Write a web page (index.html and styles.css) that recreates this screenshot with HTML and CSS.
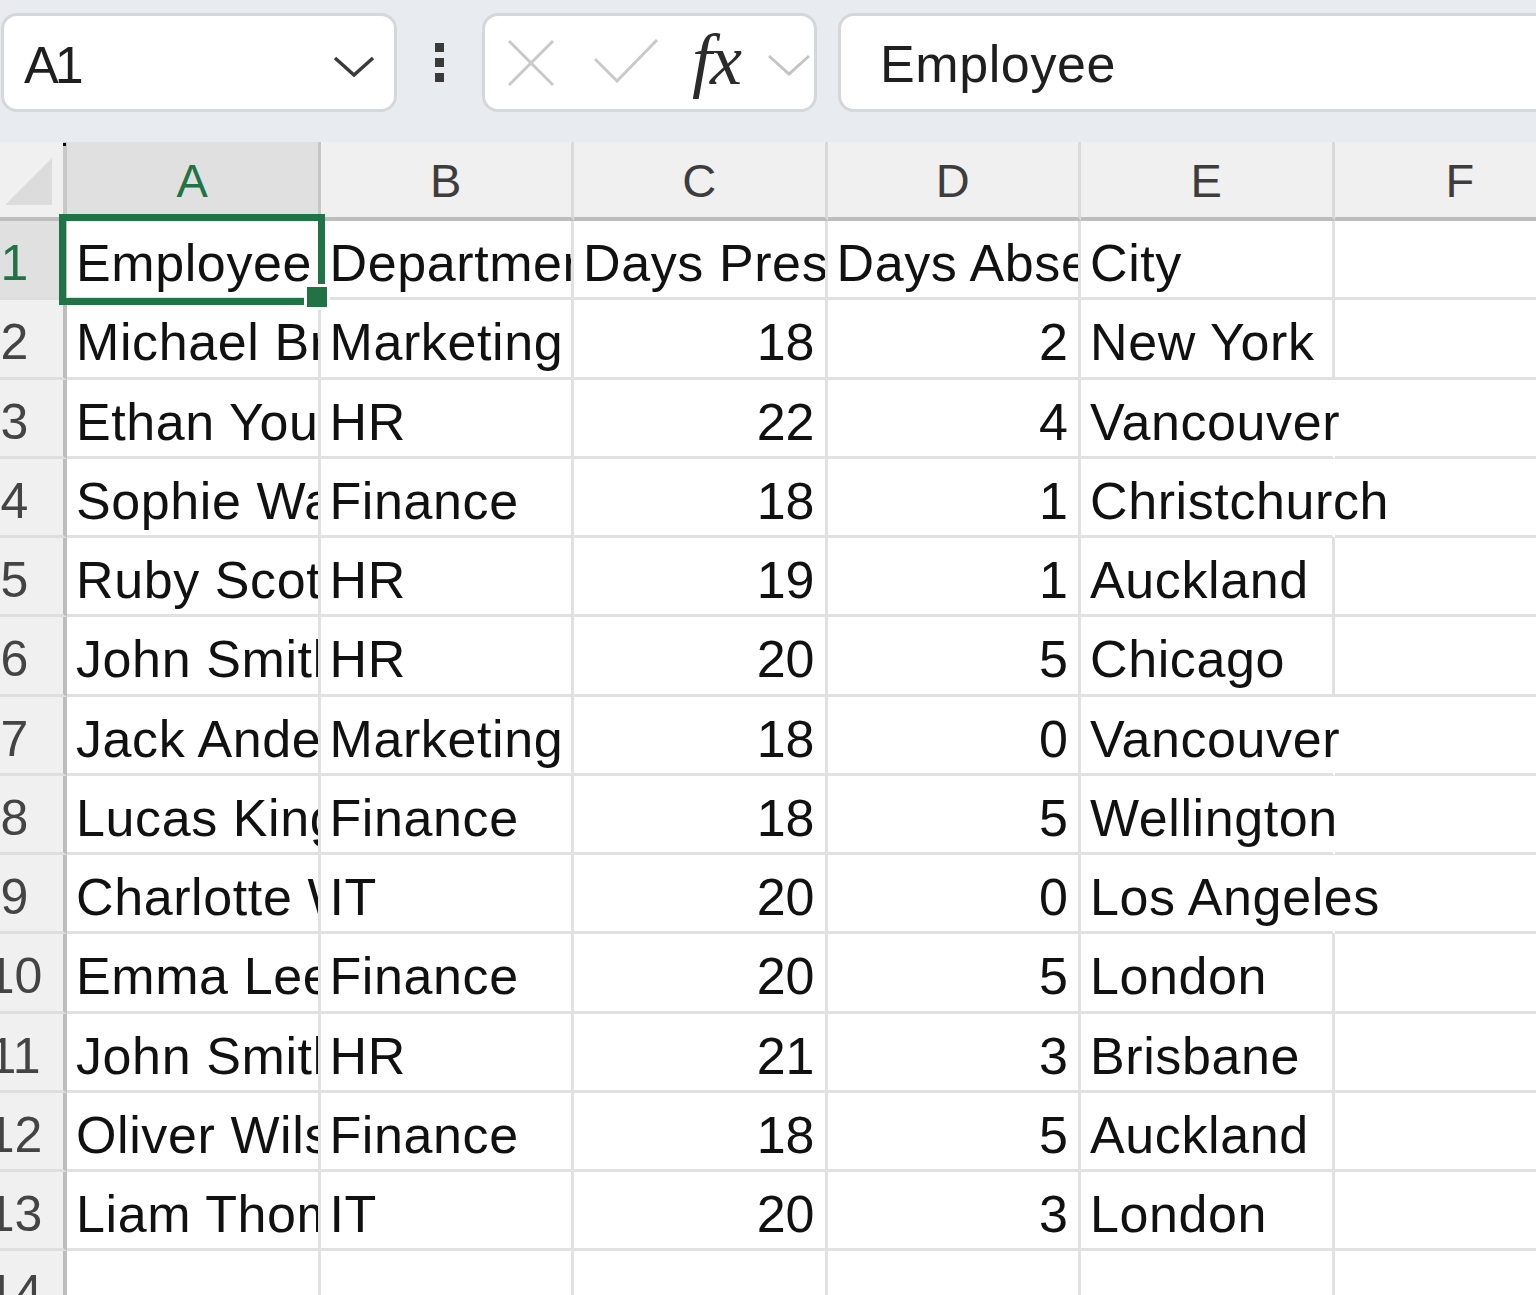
FILE: index.html
```html
<!DOCTYPE html>
<html lang="en">
<head>
<meta charset="utf-8">
<title>Sheet</title>
<link rel="stylesheet" href="styles.css">
</head>
<body>
<div class="toolbar">
  <div class="namebox">
    <span class="ref">A1</span>
    <svg class="nb-chev" width="42" height="22" viewBox="0 0 42 22"><polyline points="2,3 21,20 40,3" fill="none" stroke="#3a3a3a" stroke-width="3.5"/></svg>
  </div>
  <div class="dots"><i></i><i></i><i></i></div>
  <div class="fxbox">
    <svg class="ic-x" width="48" height="48" viewBox="0 0 48 48"><path d="M2 2 L46 46 M46 2 L2 46" stroke="#c9c9c9" stroke-width="3" fill="none"/></svg>
    <svg class="ic-check" width="64" height="44" viewBox="0 0 64 44"><polyline points="1,20 23,42 63,1" fill="none" stroke="#c9c9c9" stroke-width="3"/></svg>
    <span class="fx">fx</span>
    <svg class="ic-chev" width="42" height="22" viewBox="0 0 42 22"><polyline points="1,2 21,20 41,2" fill="none" stroke="#c4c4c4" stroke-width="3"/></svg>
  </div>
  <div class="formula">Employee</div>
</div>

<div class="sheet">
  <div class="grid">
    <div class="corner"><svg width="63" height="79" viewBox="0 0 63 79"><polygon points="52,16 52,63 5,63" fill="#dcdcdc"/></svg></div>
    <div class="colhdr active">A</div>
    <div class="colhdr">B</div>
    <div class="colhdr">C</div>
    <div class="colhdr">D</div>
    <div class="colhdr">E</div>
    <div class="colhdr">F</div>

    <div class="rowhdr active"><span>1</span></div>
    <div class="cell">Employee</div><div class="cell">Department</div><div class="cell">Days Present</div><div class="cell">Days Absent</div><div class="cell">City</div><div class="cell"></div>

    <div class="rowhdr"><span>2</span></div>
    <div class="cell">Michael Brown</div><div class="cell">Marketing</div><div class="cell num">18</div><div class="cell num">2</div><div class="cell">New York</div><div class="cell"></div>

    <div class="rowhdr"><span>3</span></div>
    <div class="cell">Ethan Young</div><div class="cell">HR</div><div class="cell num">22</div><div class="cell num">4</div><div class="cell spill">Vancouver</div><div class="cell"></div>

    <div class="rowhdr"><span>4</span></div>
    <div class="cell">Sophie Walker</div><div class="cell">Finance</div><div class="cell num">18</div><div class="cell num">1</div><div class="cell spill">Christchurch</div><div class="cell"></div>

    <div class="rowhdr"><span>5</span></div>
    <div class="cell">Ruby Scott</div><div class="cell">HR</div><div class="cell num">19</div><div class="cell num">1</div><div class="cell">Auckland</div><div class="cell"></div>

    <div class="rowhdr"><span>6</span></div>
    <div class="cell">John Smith</div><div class="cell">HR</div><div class="cell num">20</div><div class="cell num">5</div><div class="cell">Chicago</div><div class="cell"></div>

    <div class="rowhdr"><span>7</span></div>
    <div class="cell">Jack Anderson</div><div class="cell">Marketing</div><div class="cell num">18</div><div class="cell num">0</div><div class="cell spill">Vancouver</div><div class="cell"></div>

    <div class="rowhdr"><span>8</span></div>
    <div class="cell">Lucas King</div><div class="cell">Finance</div><div class="cell num">18</div><div class="cell num">5</div><div class="cell spill">Wellington</div><div class="cell"></div>

    <div class="rowhdr"><span>9</span></div>
    <div class="cell">Charlotte White</div><div class="cell">IT</div><div class="cell num">20</div><div class="cell num">0</div><div class="cell spill">Los Angeles</div><div class="cell"></div>

    <div class="rowhdr"><span>10</span></div>
    <div class="cell">Emma Lee</div><div class="cell">Finance</div><div class="cell num">20</div><div class="cell num">5</div><div class="cell">London</div><div class="cell"></div>

    <div class="rowhdr"><span>11</span></div>
    <div class="cell">John Smith</div><div class="cell">HR</div><div class="cell num">21</div><div class="cell num">3</div><div class="cell">Brisbane</div><div class="cell"></div>

    <div class="rowhdr"><span>12</span></div>
    <div class="cell">Oliver Wilson</div><div class="cell">Finance</div><div class="cell num">18</div><div class="cell num">5</div><div class="cell">Auckland</div><div class="cell"></div>

    <div class="rowhdr"><span>13</span></div>
    <div class="cell">Liam Thompson</div><div class="cell">IT</div><div class="cell num">20</div><div class="cell num">3</div><div class="cell">London</div><div class="cell"></div>

    <div class="rowhdr"><span>14</span></div>
    <div class="cell"></div><div class="cell"></div><div class="cell"></div><div class="cell"></div><div class="cell"></div><div class="cell"></div>
  </div>
  <div class="selection"><div class="handle"></div></div>
  <div class="tick"></div>
</div>
</body>
</html>
```

FILE: styles.css
```css
html, body {
  margin: 0;
  padding: 0;
  width: 1536px;
  height: 1295px;
  overflow: hidden;
  background: #ffffff;
  font-family: "Liberation Sans", Arial, sans-serif;
}

.toolbar {
  height: 142px;
  box-sizing: border-box;
  padding-top: 13px;
  background: #e8ebef;
  display: flex;
  align-items: flex-start;
  overflow: hidden;
}

.namebox,
.fxbox,
.formula {
  flex-shrink: 0;
  height: 99px;
  box-sizing: border-box;
  background: #ffffff;
  border: 3px solid #d5d7da;
  border-radius: 16px;
}

.namebox {
  margin-left: 1px;
  width: 396px;
  display: flex;
  align-items: center;
  padding: 0 19px 0 20px;
}

.ref {
  font-size: 52px;
  line-height: 52px;
  letter-spacing: -4px;
  color: #1f1f1f;
  margin-top: 4px;
}

.nb-chev {
  margin-left: auto;
  margin-top: 7px;
}

.dots {
  flex-shrink: 0;
  width: 85px;
  height: 99px;
  display: flex;
  flex-direction: column;
  align-items: center;
  justify-content: center;
  gap: 6px;
}

.dots i {
  display: block;
  width: 9px;
  height: 9px;
  background: #3a3a3a;
}

.fxbox {
  width: 335px;
  display: flex;
  align-items: center;
  padding: 0 4px 0 22px;
}

.ic-check {
  margin-left: 39px;
  margin-top: -4px;
}

.fx {
  margin-left: 34px;
  font-family: "Liberation Serif", "Times New Roman", serif;
  font-style: italic;
  font-size: 72px;
  line-height: 72px;
  letter-spacing: -2px;
  color: #2b2b2b;
  margin-top: -6px;
}

.ic-chev {
  margin-left: auto;
  margin-top: 4px;
}

.formula {
  margin-left: 21px;
  width: 760px;
  padding: 22px 0 0 39px;
  font-size: 52px;
  line-height: 53px;
  letter-spacing: 0.6px;
  color: #1f1f1f;
}

.sheet {
  position: relative;
}

.grid {
  display: grid;
  grid-template-columns: 67px repeat(6, 253.5px);
  grid-template-rows: 79px;
  grid-auto-rows: 79.25px;
  background: #ffffff;
  width: 1588px;
}

.corner {
  background: #f0f0f0;
  border-bottom: 4px solid #bdbdbd;
  border-right: 4px solid #c8c8c8;
  box-sizing: border-box;
}

.corner svg {
  display: block;
}

.colhdr {
  box-sizing: border-box;
  background: #f0f0f0;
  border-bottom: 4px solid #bdbdbd;
  border-right: 3px solid #dadada;
  text-align: center;
  padding-top: 15px;
  font-size: 47px;
  line-height: 47px;
  color: #3d3d3d;
}

.colhdr.active {
  background: #e0e0e0;
  color: #217346;
  border-right-color: #c6c6c6;
}

.rowhdr {
  box-sizing: border-box;
  background: #f0f0f0;
  border-right: 4px solid #bdbdbd;
  border-bottom: 3px solid #dedede;
  display: flex;
  justify-content: center;
  align-items: flex-start;
  padding: 16px 34px 0 0;
  overflow: hidden;
  font-size: 50px;
  line-height: 52px;
  color: #444444;
  white-space: nowrap;
}

.rowhdr.active {
  background: #e0e0e0;
  color: #217346;
}

.cell {
  box-sizing: border-box;
  border-right: 3px solid #e1e1e1;
  border-bottom: 3px solid #e1e1e1;
  padding: 16px 10px 0 9px;
  font-size: 52px;
  line-height: 52px;
  letter-spacing: 0.6px;
  color: #111111;
  white-space: nowrap;
  overflow: hidden;
}

.cell.num {
  text-align: right;
  letter-spacing: 0;
}

.cell.spill {
  overflow: visible;
  border-right-color: transparent;
}

.selection {
  position: absolute;
  left: 59px;
  top: 72px;
  width: 266px;
  height: 91px;
  box-sizing: border-box;
  border: 7px solid #217346;
}

.handle {
  position: absolute;
  right: -12px;
  bottom: -12px;
  width: 20px;
  height: 20px;
  background: #217346;
  border: 3px solid #ffffff;
}

.tick {
  position: absolute;
  left: 63px;
  top: 1px;
  width: 3px;
  height: 3px;
  background: #000000;
}
```
